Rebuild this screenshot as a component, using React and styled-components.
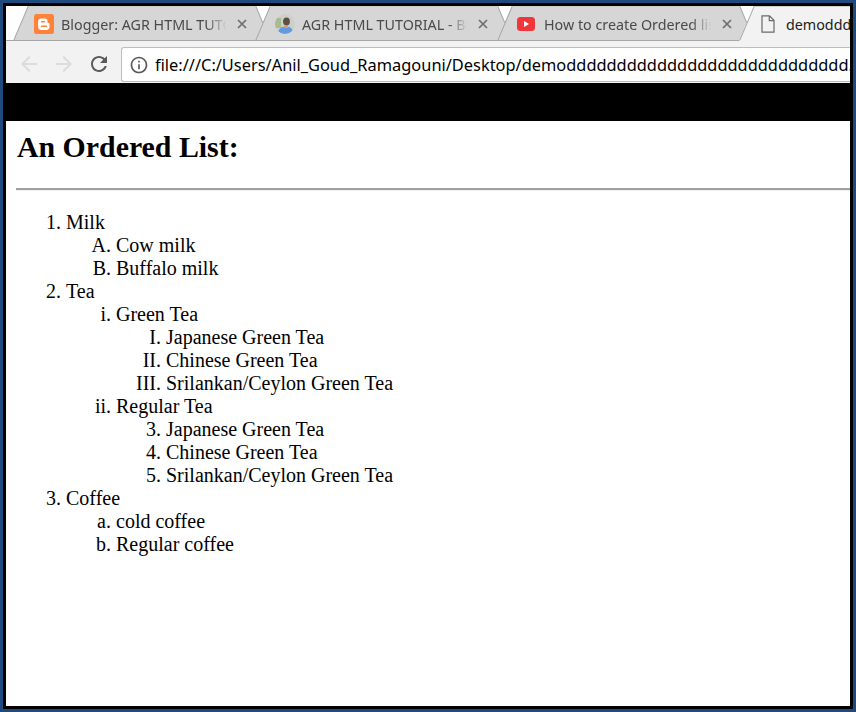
import React from "react"
import styled, { createGlobalStyle } from "styled-components"

const GlobalStyle = createGlobalStyle`
  html, body {
    margin: 0;
    padding: 0;
    background: #fff;
  }
`

const OuterFrame = styled.div`
  box-sizing: border-box;
  width: 856px;
  height: 712px;
  border: 3px solid #1f4a7d;
  overflow: hidden;
`
const Window = styled.div`
  box-sizing: border-box;
  height: 100%;
  border: 3px solid #000;
  background: #fff;
  display: flex;
  flex-direction: column;
  overflow: hidden;
`
const TabStrip = styled.div`
  flex: 0 0 35px;
  display: flex;
  padding-left: 7px;
  background: #fff;
  position: relative;
  overflow: hidden;
  &::after {
    content: "";
    position: absolute;
    left: 0;
    right: 0;
    bottom: 0;
    height: 1px;
    background: #a6a6a6;
    z-index: 1;
  }
`
const Tab = styled.div`
  position: relative;
  flex: 0 0 ${(p) => (p.$active ? "340px" : "257px")};
  height: 35px;
  margin-left: ${(p) => (p.$first ? "0" : "-15px")};
  z-index: ${(p) => (p.$active ? 2 : 0)};
  display: flex;
  align-items: center;
  padding: 0 0 0 ${(p) => p.$pad}px;
  box-sizing: border-box;
  isolation: isolate;

  &::before,
  &::after {
    content: "";
    position: absolute;
    top: 0;
    bottom: 0;
    width: 50%;
    box-sizing: border-box;
    background: ${(p) => (p.$active ? "#f2f2f2" : "#d6d6d6")};
    border-top: 1px solid #d0d0d0;
    border-bottom: ${(p) => (p.$active ? "1px solid #f2f2f2" : "0")};
    z-index: -1;
  }
  &::before {
    left: 0;
    border-left: 1px solid #a6a6a6;
    transform-origin: bottom left;
    transform: skewX(-23deg);
  }
  &::after {
    right: 0;
    border-right: 1px solid #a6a6a6;
    transform-origin: bottom right;
    transform: skewX(23deg);
  }
`
const TabTitle = styled.span`
  width: ${(p) => p.$width}px;
  margin-left: ${(p) => p.$gap}px;
  padding-top: 2px;
  font: 14.3px "Noto Sans", sans-serif;
  color: ${(p) => (p.$active ? "#1c1c1c" : "#4a4a4a")};
  white-space: nowrap;
  overflow: hidden;
  -webkit-mask-image: ${(p) =>
    p.$active ? "none" : "linear-gradient(to right, #000 86%, transparent 98%)"};
  mask-image: ${(p) =>
    p.$active ? "none" : "linear-gradient(to right, #000 86%, transparent 98%)"};
`
const CloseGlyph = styled.svg`
  margin-left: 7px;
  margin-top: 1px;
  flex: none;
`
const Toolbar = styled.div`
  flex: 0 0 42px;
  background: #f2f2f2;
  display: flex;
  align-items: flex-start;
  padding-left: 11px;
  box-sizing: border-box;
  overflow: hidden;
`
const NavIcons = styled.div`
  display: flex;
  gap: 11px;
  width: 104px;
  flex: none;
  padding-top: 11px;
  & svg {
    display: block;
  }
`
const UrlBox = styled.div`
  flex: 1 0 auto;
  height: 35px;
  margin-top: 6px;
  background: #fff;
  border: 1px solid #bdbdbd;
  border-right: 0;
  border-radius: 3px 0 0 3px;
  box-sizing: border-box;
  display: flex;
  align-items: center;
  padding-left: 7px;
  min-width: 0;
  overflow: hidden;
`
const UrlText = styled.span`
  margin-left: 6px;
  font: 16.4px "Noto Sans", sans-serif;
  color: #000;
  white-space: nowrap;
`
const BlackBand = styled.div`
  flex: 0 0 38px;
  background: #000;
`
const Page = styled.div`
  flex: 1;
  padding: 9px 0 0 10px;
  font: 20px/23px "Liberation Serif", "Times New Roman", serif;
  color: #000;
`
const Heading = styled.h2`
  margin: 0 0 24px;
  padding-left: 1px;
  font: bold 29.85px/34px "Liberation Serif", "Times New Roman", serif;
`
const Rule = styled.hr`
  margin: 0 0 20px;
  height: 2px;
  border: 0;
  background: #a0a0a0;
  border-bottom: 1px solid #eee;
`
const List = styled.ol`
  margin: 0;
  padding-left: 50px;
  list-style-type: ${(p) => p.$kind};
`

const Close = () => (
  <CloseGlyph width="10" height="10" viewBox="0 0 10 10" stroke="#6e6e6e" strokeWidth="1.7">
    <path d="M1 1l8 8M9 1l-8 8" />
  </CloseGlyph>
)

const BloggerIcon = () => (
  <svg width="20" height="20" viewBox="0 0 20 20" style={{ flex: "none" }}>
    <rect width="20" height="20" rx="2.5" fill="#ff8237" />
    <path
      d="M7 4.5h4c1.6 0 2.5 1 2.5 2.4v1.5c0 .5.3.7.8.7.8 0 1.2.4 1.2 1.2v2.8c0 1.6-1.2 2.9-2.9 2.9H7c-1.7 0-2.9-1.3-2.9-2.9V7.4C4.1 5.7 5.3 4.5 7 4.5z"
      fill="#fff"
    />
    <rect x="6.8" y="6.9" width="4.4" height="1.7" rx=".8" fill="#ff8237" />
    <rect x="6.8" y="11.4" width="6.4" height="1.7" rx=".8" fill="#ff8237" />
  </svg>
)

const AvatarIcon = () => (
  <svg width="20" height="20" viewBox="0 0 20 20" style={{ flex: "none" }}>
    <clipPath id="avatar-clip">
      <circle cx="10" cy="10" r="10" />
    </clipPath>
    <g clipPath="url(#avatar-clip)">
      <rect width="20" height="20" fill="#cfcfca" />
      <rect y="4" width="6" height="10" fill="#a9bb8f" />
      <ellipse cx="11.5" cy="7.5" rx="3.4" ry="4" fill="#5d5048" />
      <path d="M3 20c0-5 3-7.5 8-7.5s7 2.5 7 7.5z" fill="#5f9be0" />
      <rect x="9" y="12" width="4" height="2" fill="#e09a5a" />
    </g>
  </svg>
)

const YoutubeIcon = () => (
  <svg width="18" height="14" viewBox="0 0 18 14" style={{ flex: "none" }}>
    <rect width="18" height="14" rx="3.5" fill="#f0353b" />
    <path d="M7 4l5 3-5 3z" fill="#fff" />
  </svg>
)

const FileIcon = () => (
  <svg width="14" height="18" viewBox="0 0 14 18" fill="none" stroke="#6a6a6a" strokeWidth="1.2" style={{ flex: "none" }}>
    <path d="M1 .8h7.5L13 5.3v11.9H1zM8.3 1v4.6H13" />
  </svg>
)

const ArrowLeft = ({ color }) => (
  <svg width="24" height="24" viewBox="0 0 24 24" fill={color}>
    <path d="M20 11H7.83l5.59-5.59L12 4l-8 8 8 8 1.41-1.41L7.83 13H20v-2z" />
  </svg>
)
const ArrowRight = ({ color }) => (
  <svg width="24" height="24" viewBox="0 0 24 24" fill={color}>
    <path d="M4 11h12.17l-5.59-5.59L12 4l8 8-8 8-1.41-1.41L16.17 13H4v-2z" />
  </svg>
)
const Reload = () => (
  <svg width="24" height="24" viewBox="0 0 24 24" fill="#5a5a5a">
    <path d="M17.65 6.35C16.2 4.9 14.21 4 12 4c-4.42 0-7.99 3.58-7.99 8s3.57 8 7.99 8c3.73 0 6.84-2.55 7.73-6h-2.08c-.82 2.33-3.04 4-5.65 4-3.31 0-6-2.69-6-6s2.69-6 6-6c1.66 0 3.14.69 4.22 1.78L13 11h7V4l-2.35 2.35z" />
  </svg>
)
const Info = () => (
  <svg width="20" height="20" viewBox="0 0 24 24" fill="#5a5a5a" style={{ flex: "none" }}>
    <path d="M11 7h2v2h-2zm0 4h2v6h-2zm1-9C6.48 2 2 6.48 2 12s4.48 10 10 10 10-4.48 10-10S17.52 2 12 2zm0 18c-4.41 0-8-3.59-8-8s3.59-8 8-8 8 3.59 8 8-3.59 8-8 8z" />
  </svg>
)

const App = () => {
  return (
    <OuterFrame>
      <GlobalStyle />
      <Window>
        <TabStrip>
          <Tab $first $pad={21}>
            <BloggerIcon />
            <TabTitle $width={169} $gap={7}>Blogger: AGR HTML TUTORIAL</TabTitle>
            <Close />
          </Tab>
          <Tab $pad={20}>
            <AvatarIcon />
            <TabTitle $width={169} $gap={7}>AGR HTML TUTORIAL - Blogger</TabTitle>
            <Close />
          </Tab>
          <Tab $pad={20}>
            <YoutubeIcon />
            <TabTitle $width={171} $gap={9}>How to create Ordered lists in HTML</TabTitle>
            <Close />
          </Tab>
          <Tab $active $pad={22}>
            <FileIcon />
            <TabTitle $active $width={100} $gap={11}>demoddddddddddd</TabTitle>
          </Tab>
        </TabStrip>
        <Toolbar>
          <NavIcons>
            <ArrowLeft color="#dcdcdc" />
            <ArrowRight color="#dcdcdc" />
            <Reload />
          </NavIcons>
          <UrlBox>
            <Info />
            <UrlText>file:///C:/Users/Anil_Goud_Ramagouni/Desktop/demodddddddddddddddddddddddddddd.html</UrlText>
          </UrlBox>
        </Toolbar>
        <BlackBand />
        <Page>
          <Heading>An Ordered List:</Heading>
          <Rule />
          <List $kind="decimal">
            <li>
              Milk
              <List $kind="upper-alpha">
                <li>Cow milk</li>
                <li>Buffalo milk</li>
              </List>
            </li>
            <li>
              Tea
              <List $kind="lower-roman">
                <li>
                  Green Tea
                  <List $kind="upper-roman">
                    <li>Japanese Green Tea</li>
                    <li>Chinese Green Tea</li>
                    <li>Srilankan/Ceylon Green Tea</li>
                  </List>
                </li>
                <li>
                  Regular Tea
                  <List $kind="decimal" start={3}>
                    <li>Japanese Green Tea</li>
                    <li>Chinese Green Tea</li>
                    <li>Srilankan/Ceylon Green Tea</li>
                  </List>
                </li>
              </List>
            </li>
            <li>
              Coffee
              <List $kind="lower-alpha">
                <li>cold coffee</li>
                <li>Regular coffee</li>
              </List>
            </li>
          </List>
        </Page>
      </Window>
    </OuterFrame>
  )
}

export default App
